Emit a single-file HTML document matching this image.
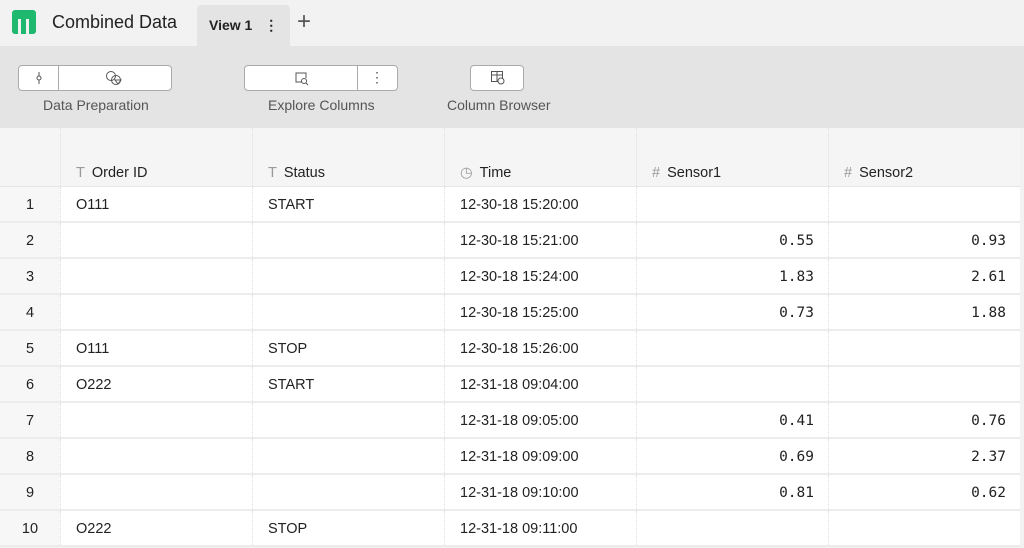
<!DOCTYPE html><html><head><style>
*{box-sizing:border-box;margin:0;padding:0}
body{width:1024px;height:548px;overflow:hidden;background:#f2f2f2;font-family:"Liberation Sans",sans-serif;color:#222;position:relative}
.top{position:absolute;left:0;top:0;width:1024px;height:46px;background:#f2f2f2}
.logo{position:absolute;left:12px;top:10px;width:24px;height:24px;background:#1fb86f;border-radius:3px}
.logo i{position:absolute;background:#f2f2f2;width:3px;top:9px;height:15px}
.title{position:absolute;left:52px;top:12px;font-size:18px;color:#222}
.tab{position:absolute;left:197px;top:5px;width:93px;height:41px;background:#e4e4e4;border-radius:4px 4px 0 0;font-size:14px;font-weight:bold;padding:12px 0 0 12px}
.plus{position:absolute;left:297px;top:8px;font-size:24px;color:#555;font-weight:300}
.tb{position:absolute;left:0;top:46px;width:1024px;height:82px;background:#e4e4e4}
.btn{position:absolute;top:19px;height:26px;background:#fff;border:1px solid #aaa;border-radius:4px}
.btn .sep{position:absolute;top:0;bottom:0;width:1px;background:#aaa}
.lbl{position:absolute;top:51px;font-size:14px;color:#555}
.grid{position:absolute;left:0;top:128px}
.row{position:absolute;left:0;width:1024px;height:36px;border-bottom:2px solid #ececec;background:#fff}
.hdr{height:59px;background:#f5f5f5;top:0;border-bottom:1px solid #e6e6e6}
.c{position:absolute;top:0;height:100%;border-left:1px dotted #e0e0e0;font-size:14.5px;padding:10px 15px 0;white-space:nowrap}
.n{left:0;width:60px;background:#f7f7f7;text-align:center;padding:10px 0 0;border-left:none}
.num{font-family:"DejaVu Sans Mono",monospace;text-align:right;padding-right:14px;padding-top:10px;font-size:14.5px}
.hdr .c{padding-top:37px}
.ic{color:#999;margin-right:7px}
.edge{position:absolute;left:1020px;top:128px;width:4px;height:420px;background:#f2f2f2}
</style></head><body>
<div class="top">
<div class="logo"><i style="left:6px"></i><i style="left:14px"></i></div>
<div class="title">Combined Data</div>
<div class="tab">View 1 <span style="margin-left:8px;font-weight:bold">⋮</span></div>
<div class="plus">+</div>
</div>
<div class="tb">
<div class="btn" style="left:18px;width:154px"><div class="sep" style="left:39px"></div>
<svg style="position:absolute;left:14px;top:5px" width="12" height="14"><path d="M6 1V13" stroke="#555" stroke-width="1"/><circle cx="6" cy="7" r="2" fill="#fff" stroke="#555"/></svg>
<svg style="position:absolute;left:86px;top:4px" width="18" height="16"><circle cx="6" cy="6" r="4.5" fill="none" stroke="#555"/><circle cx="11" cy="10" r="4.5" fill="none" stroke="#555"/><path d="M10 10l3 4 3-4z" fill="#fff" stroke="#555"/></svg></div>
<div class="lbl" style="left:43px">Data Preparation</div>
<div class="btn" style="left:244px;width:154px"><div class="sep" style="left:112px"></div>
<svg style="position:absolute;left:48px;top:4px" width="16" height="16"><path d="M9 12H3V3h10v5" fill="none" stroke="#555"/><circle cx="11" cy="11" r="2.5" fill="none" stroke="#555"/><path d="M13 13l2 2" stroke="#555"/></svg>
<span style="position:absolute;left:125px;top:3px;font-size:14px;color:#555">⋮</span></div>
<div class="lbl" style="left:268px">Explore Columns</div>
<div class="btn" style="left:470px;width:54px">
<svg style="position:absolute;left:19px;top:4px" width="16" height="16"><rect x="1.5" y="1.5" width="11" height="10" fill="none" stroke="#555"/><path d="M1.5 5h11M7 1.5v10" stroke="#555"/><circle cx="11" cy="11" r="3" fill="#fff" stroke="#555"/></svg></div>
<div class="lbl" style="left:447px">Column Browser</div>
</div>
<div class="grid">
<div class="row hdr">
<div class="c n" style="background:#f5f5f5"></div>
<div class="c" style="left:60px;width:192px"><span class="ic">T</span>Order ID</div>
<div class="c" style="left:252px;width:192px"><span class="ic">T</span>Status</div>
<div class="c" style="left:444px;width:192px"><span class="ic">◷</span>Time</div>
<div class="c" style="left:636px;width:192px"><span class="ic">#</span>Sensor1</div>
<div class="c" style="left:828px;width:192px"><span class="ic">#</span>Sensor2</div>
</div>
</div>
<div id="rows"></div>
<div class="edge"></div>
<script>
var d=[["O111","START","12-30-18 15:20:00","",""],["","","12-30-18 15:21:00","0.55","0.93"],["","","12-30-18 15:24:00","1.83","2.61"],["","","12-30-18 15:25:00","0.73","1.88"],["O111","STOP","12-30-18 15:26:00","",""],["O222","START","12-31-18 09:04:00","",""],["","","12-31-18 09:05:00","0.41","0.76"],["","","12-31-18 09:09:00","0.69","2.37"],["","","12-31-18 09:10:00","0.81","0.62"],["O222","STOP","12-31-18 09:11:00","",""]];
var h="";d.forEach(function(r,i){h+='<div class="row" style="top:'+(187+i*36)+'px"><div class="c n">'+(i+1)+'</div><div class="c" style="left:60px;width:192px">'+r[0]+'</div><div class="c" style="left:252px;width:192px">'+r[1]+'</div><div class="c" style="left:444px;width:192px">'+r[2]+'</div><div class="c num" style="left:636px;width:192px">'+r[3]+'</div><div class="c num" style="left:828px;width:192px">'+r[4]+'</div></div>';});
document.getElementById("rows").innerHTML=h;
</script>
</body></html>
